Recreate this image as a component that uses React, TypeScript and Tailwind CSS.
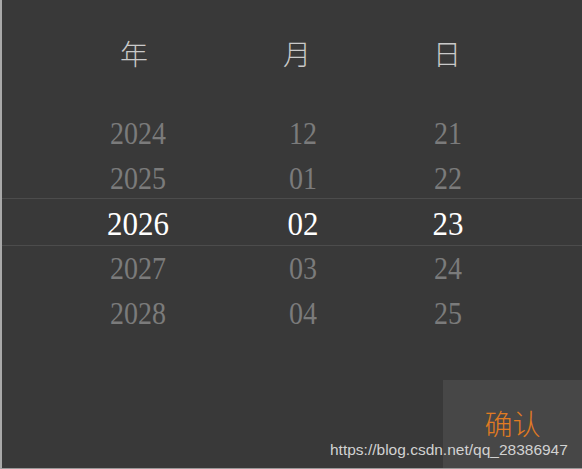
const years = ['2024', '2025', '2026', '2027', '2028']
const months = ['12', '01', '02', '03', '04']
const days = ['21', '22', '23', '24', '25']

const serif = { fontFamily: '"Liberation Serif", "Noto Sans CJK SC", serif' }

function Wheel({ title, items, width, shift }: { title: string; items: string[]; width: string; shift: string }) {
  return (
    <div className={`flex flex-col items-center ${width}`}>
      <div className="h-[58px] flex items-center text-[28px] text-[#c9c9c9] font-['Noto_Sans_CJK_SC',sans-serif] font-light">{title}</div>
      <div className="h-[29px]" />
      {items.map((v, i) => (
        <div
          key={v}
          className={`h-[45px] flex items-center leading-none scale-y-[1.1] ${shift} ${i === 2 ? 'text-[31px] text-white' : 'text-[28px] text-[#7b7b7b]'}`}
          style={serif}
        >
          {v}
        </div>
      ))}
    </div>
  )
}

export default function App() {
  return (
    <div className="w-[582px] h-[469px] bg-[#393939] border-l-2 border-l-[#a9a9a9] border-b border-b-[#9a9a9a] relative overflow-hidden flex flex-col">
      {/* selection lines */}
      <div className="absolute left-0 right-0 top-[198px] h-[48px] border-y border-[#4c4c4c]" />

      <div className="flex pl-[54px] pt-[24px]">
        <Wheel title="年" items={years} width="w-[156px]" shift="pl-[8px]" />
        <Wheel title="月" items={months} width="w-[170px]" shift="pl-[12px]" />
        <Wheel title="日" items={days} width="w-[130px]" shift="pl-[2px]" />
      </div>

      <div className="flex-1" />
      <div className="flex justify-end">
        <button className="w-[139px] h-[88px] bg-[#474747] flex items-center justify-center pb-[2px] text-[28px] text-[#e07b22] font-['Noto_Sans_CJK_SC',sans-serif] font-light">
          确认
        </button>
      </div>

      {/* watermark */}
      <div className="absolute left-[328px] top-[438px] text-[15.5px] text-[#d2d2d2] font-['Liberation_Sans',sans-serif]">
        https://blog.csdn.net/qq_28386947
      </div>
    </div>
  )
}
